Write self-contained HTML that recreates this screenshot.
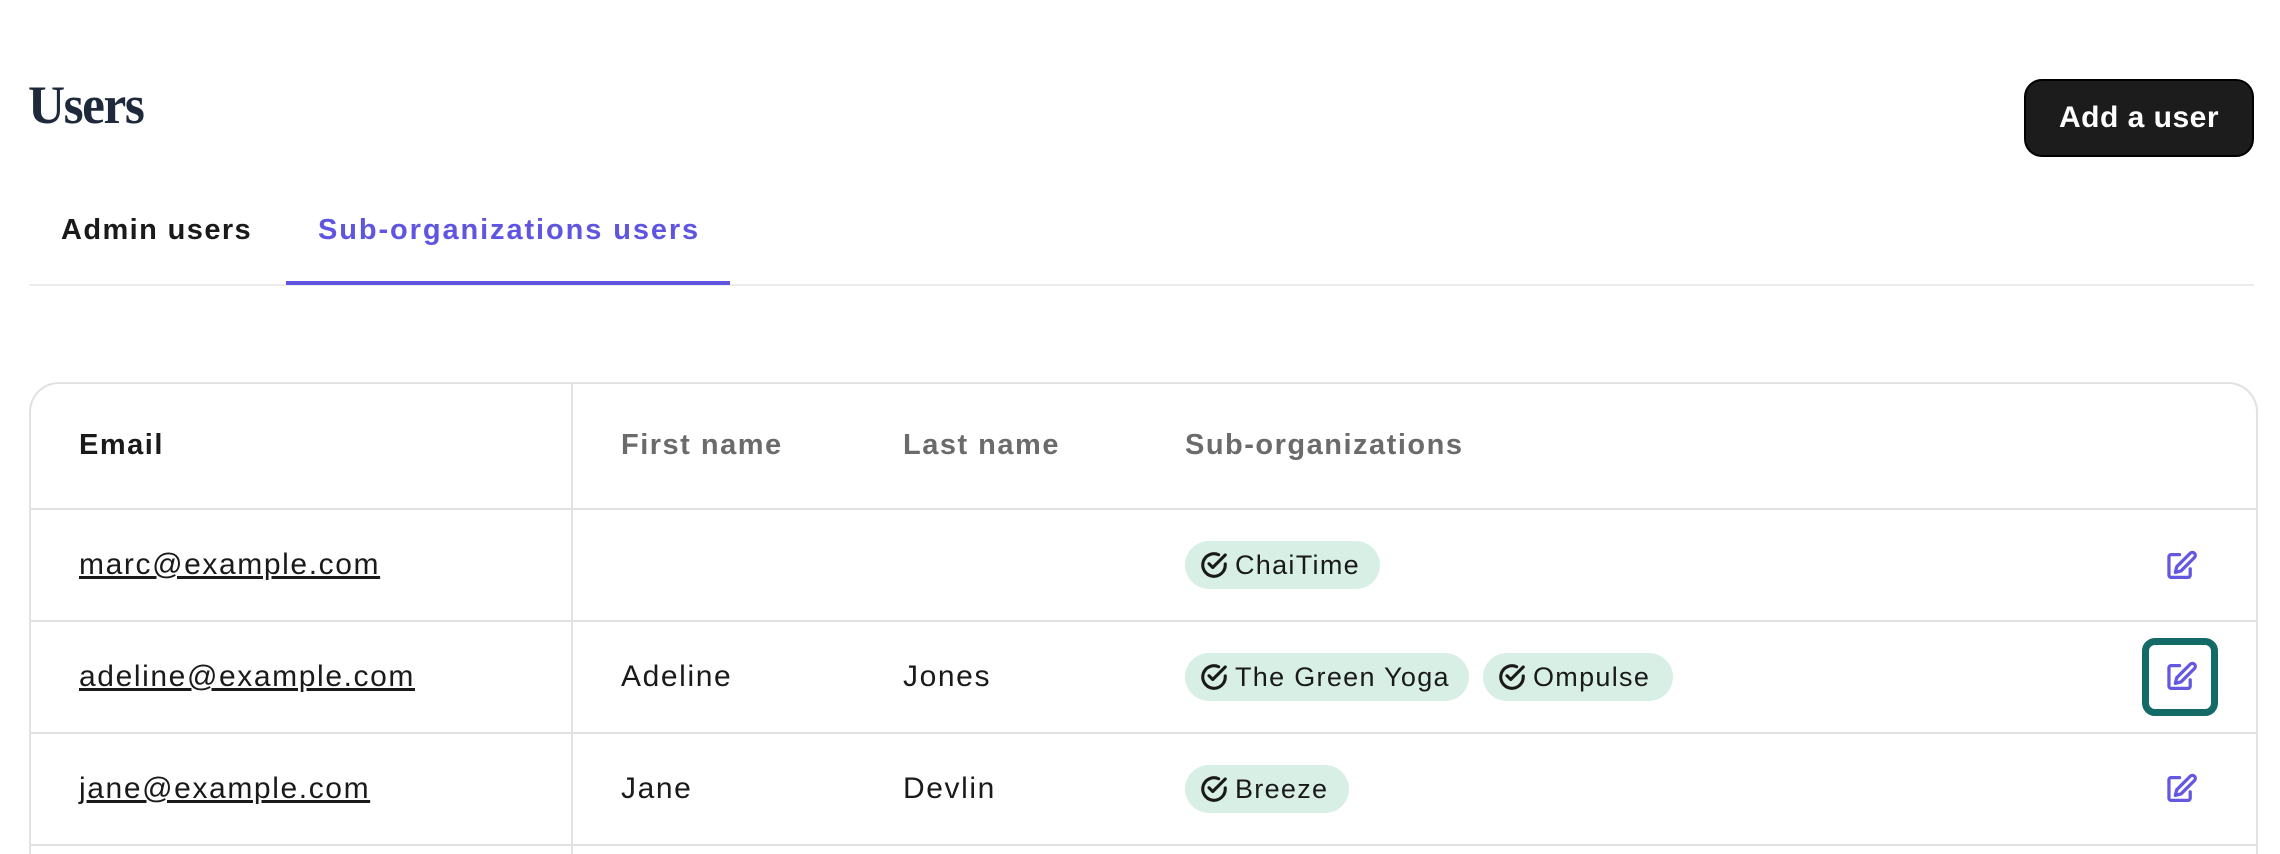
<!DOCTYPE html>
<html><head><meta charset="utf-8"><style>
html,body{margin:0;width:2280px;height:854px;overflow:hidden}
body{background:#fff;font-family:"Liberation Sans",sans-serif;position:relative}
.a{position:absolute;white-space:nowrap}
.t{font-size:30px;color:#1a1a1a;letter-spacing:1.6px;line-height:40px}
.h{font-size:29px;font-weight:bold;color:#6b6b6b;letter-spacing:1.5px;line-height:40px}
.chip{position:absolute;height:48px;border-radius:24px;background:#d8efe6;font-size:27px;color:#1a1a1a;letter-spacing:1.3px;display:flex;align-items:center;padding:0 14px 0 14px;box-sizing:border-box}
.chip svg{margin-right:6px}
.hl{position:absolute;left:29px;width:2229px;height:2px;background:#e2e2e2}
</style></head><body>
<div style="position:absolute;left:0;top:0;width:2280px;height:854px;overflow:hidden">
<div class="a" style="left:28px;top:74px;font-family:'Liberation Serif',serif;font-weight:bold;font-size:54px;color:#1e2a3b;letter-spacing:-1.5px;transform:scaleX(0.95);transform-origin:left">Users</div>
<div class="a" style="left:2024px;top:79px;width:230px;height:78px;background:#1c1c1c;border-radius:18px;border:2px solid #000;box-sizing:border-box;color:#fff;font-weight:bold;font-size:30px;display:flex;align-items:center;justify-content:center;letter-spacing:0.5px">Add a user</div>
<div class="a" style="left:61px;top:214px;font-size:29px;font-weight:bold;color:#1a1a1a;letter-spacing:1.4px">Admin users</div>
<div class="a" style="left:318px;top:214px;font-size:29px;font-weight:bold;color:#5f55e0;letter-spacing:1.9px">Sub-organizations users</div>
<div class="a" style="left:29px;top:284px;width:2225px;height:2px;background:#ececec"></div>
<div class="a" style="left:286px;top:281px;width:444px;height:4px;background:#5f55e0"></div>
<div class="a" style="left:29px;top:382px;width:2229px;height:472px;border:2px solid #e2e2e2;border-bottom:none;border-radius:30px 30px 0 0;box-sizing:border-box"></div>
<div class="a" style="left:571px;top:384px;width:2px;height:470px;background:#e2e2e2"></div>
<div class="hl" style="top:508px"></div><div class="hl" style="top:620px"></div><div class="hl" style="top:732px"></div><div class="hl" style="top:844px"></div>
<div class="a h" style="left:79px;top:425px;color:#1a1a1a">Email</div>
<div class="a h" style="left:621px;top:425px">First name</div>
<div class="a h" style="left:903px;top:425px">Last name</div>
<div class="a h" style="left:1185px;top:425px">Sub-organizations</div>
<div class="a t" style="left:79px;top:545px;text-decoration:underline">marc@example.com</div>
<div class="a t" style="left:79px;top:657px;text-decoration:underline">adeline@example.com</div>
<div class="a t" style="left:79px;top:769px;text-decoration:underline">jane@example.com</div>
<div class="a t" style="left:621px;top:657px">Adeline</div>
<div class="a t" style="left:903px;top:657px">Jones</div>
<div class="a t" style="left:621px;top:769px">Jane</div>
<div class="a t" style="left:903px;top:769px">Devlin</div>
<div class="chip" style="left:1185px;top:541px;width:195px"><svg width="30" height="30" viewBox="0 0 24 24" fill="none" stroke="#1a1a1a" stroke-width="2.5" stroke-linecap="round" stroke-linejoin="round"><path d="M21 11.1V12a9 9 0 1 1-5.3-8.2"/><path d="M8 11l3 3L21 4"/></svg>ChaiTime</div>
<div class="chip" style="left:1185px;top:653px;width:284px"><svg width="30" height="30" viewBox="0 0 24 24" fill="none" stroke="#1a1a1a" stroke-width="2.5" stroke-linecap="round" stroke-linejoin="round"><path d="M21 11.1V12a9 9 0 1 1-5.3-8.2"/><path d="M8 11l3 3L21 4"/></svg>The Green Yoga</div>
<div class="chip" style="left:1483px;top:653px;width:190px"><svg width="30" height="30" viewBox="0 0 24 24" fill="none" stroke="#1a1a1a" stroke-width="2.5" stroke-linecap="round" stroke-linejoin="round"><path d="M21 11.1V12a9 9 0 1 1-5.3-8.2"/><path d="M8 11l3 3L21 4"/></svg>Ompulse</div>
<div class="chip" style="left:1185px;top:765px;width:164px"><svg width="30" height="30" viewBox="0 0 24 24" fill="none" stroke="#1a1a1a" stroke-width="2.5" stroke-linecap="round" stroke-linejoin="round"><path d="M21 11.1V12a9 9 0 1 1-5.3-8.2"/><path d="M8 11l3 3L21 4"/></svg>Breeze</div>
<svg class="a" style="left:2164px;top:549px" width="34" height="34" viewBox="0 0 24 24" fill="none" stroke="#6457e0" stroke-width="2.3" stroke-linecap="round" stroke-linejoin="round"><path d="M11 4H5a1.5 1.5 0 0 0-1.5 1.5v13A1.5 1.5 0 0 0 5 20h12a1.5 1.5 0 0 0 1.5-1.5V14"/><path d="M18.5 3a2 2 0 0 1 3 3L12 15.5l-4 1 1-4z"/></svg>
<div class="a" style="left:2142px;top:638px;width:76px;height:78px;border:7px solid #136a66;border-radius:13px;box-sizing:border-box"></div>
<svg class="a" style="left:2164px;top:660px" width="34" height="34" viewBox="0 0 24 24" fill="none" stroke="#6457e0" stroke-width="2.3" stroke-linecap="round" stroke-linejoin="round"><path d="M11 4H5a1.5 1.5 0 0 0-1.5 1.5v13A1.5 1.5 0 0 0 5 20h12a1.5 1.5 0 0 0 1.5-1.5V14"/><path d="M18.5 3a2 2 0 0 1 3 3L12 15.5l-4 1 1-4z"/></svg>
<svg class="a" style="left:2164px;top:772px" width="34" height="34" viewBox="0 0 24 24" fill="none" stroke="#6457e0" stroke-width="2.3" stroke-linecap="round" stroke-linejoin="round"><path d="M11 4H5a1.5 1.5 0 0 0-1.5 1.5v13A1.5 1.5 0 0 0 5 20h12a1.5 1.5 0 0 0 1.5-1.5V14"/><path d="M18.5 3a2 2 0 0 1 3 3L12 15.5l-4 1 1-4z"/></svg>
</div>
</body></html>
